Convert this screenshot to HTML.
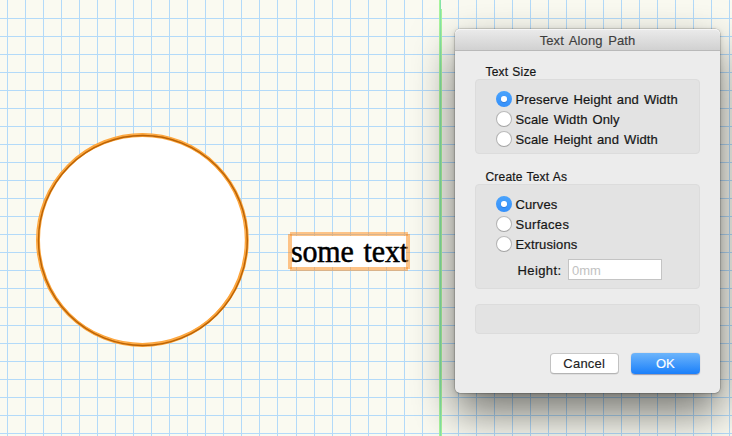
<!DOCTYPE html>
<html><head><meta charset="utf-8"><title>Text Along Path</title>
<style>
html,body{margin:0;padding:0;}
body{width:732px;height:436px;overflow:hidden;background:#fafaf1;position:relative;font-family:"Liberation Sans",sans-serif;}
#grid{position:absolute;left:0;top:0;}
#sometext{position:absolute;left:292px;top:236px;width:114px;height:31px;background:#fff;}
.bd{position:absolute;background:rgba(255,140,30,0.5);}
#sometext span{position:absolute;left:-1px;top:-1.5px;-webkit-text-stroke:0.5px #000;letter-spacing:-0.15px;word-spacing:2.5px;transform:scaleY(1.035);transform-origin:0 27px;font-family:"Liberation Serif",serif;font-size:30px;line-height:34px;color:#000;white-space:nowrap;}
#dlg{position:absolute;left:455px;top:29px;width:265px;height:364px;background:#ececec;border-radius:5px;box-shadow:0 0 0 0.5px rgba(0,0,0,0.25),0 20px 44px rgba(0,0,0,0.55),0 1px 5px rgba(0,0,0,0.18);}
#title{position:absolute;left:0;top:0;width:265px;height:21px;border-radius:5px 5px 0 0;background:linear-gradient(#ebebeb,#d1d1d1);border-bottom:1px solid #b9b9b9;box-shadow:inset 0 1px 0 #f6f6f6;text-align:center;font-size:13px;line-height:23px;color:#3e3e3e;-webkit-text-stroke:0.15px #3e3e3e;word-spacing:2px;letter-spacing:0.08px;}
.lbl{position:absolute;font-size:13px;line-height:14px;color:#161616;-webkit-text-stroke:0.2px #161616;white-space:nowrap;word-spacing:1.3px;letter-spacing:0.12px;}
.lbl.sm{font-size:12px;word-spacing:0.5px;letter-spacing:0.2px;}
.box{position:absolute;left:20px;width:223px;background:#e3e3e3;border:1px solid #dcdcdc;border-radius:4px;}
.radio{position:absolute;width:14px;height:14px;border-radius:50%;border:1px solid;border-color:#bbb #b2b2b2 #a4a4a4;background:#fff;}
.radio.on{border:none;width:16px;height:16px;background:linear-gradient(#4aa3fc,#3490fb);}
.radio.on::after{content:"";position:absolute;left:5.25px;top:5.25px;width:5.5px;height:5.5px;border-radius:50%;background:#fff;box-shadow:0 0.8px 0.8px rgba(20,70,160,0.45);}
#inp{position:absolute;left:113px;top:230px;width:92px;height:18.5px;border:1px solid #c4c4c4;background:#fff;font-size:13px;line-height:18px;color:#c2c2c2;}
#inp span{position:absolute;left:3px;top:1.6px;}
.btn{position:absolute;top:324.5px;height:19px;width:67px;border-radius:4px;font-size:13px;line-height:19px;text-align:center;}
#cancel{left:95px;top:324px;width:66.5px;height:18.5px;line-height:19px;letter-spacing:0.25px;background:#fff;border:1px solid;border-color:#c8c8c8 #c2c2c2 #b4b4b4;box-shadow:0 0.5px 0.5px rgba(0,0,0,0.12);color:#222;-webkit-text-stroke:0.15px #222;}
#ok{left:176px;top:324px;width:68.7px;height:21px;line-height:21px;background:linear-gradient(#6db5fb,#1a7ffa);color:#fff;box-shadow:0 0.5px 1px rgba(0,0,60,0.35);-webkit-text-stroke:0.15px #fff;}
</style></head><body>
<svg id="grid" width="732" height="436" viewBox="0 0 732 436" shape-rendering="crispEdges">
<g fill="#b3daf9">
<rect x="7" y="0" width="1" height="436"/>
<rect x="25" y="0" width="1" height="436"/>
<rect x="43" y="0" width="1" height="436"/>
<rect x="61" y="0" width="1" height="436"/>
<rect x="79" y="0" width="1" height="436"/>
<rect x="97" y="0" width="1" height="436"/>
<rect x="115" y="0" width="1" height="436"/>
<rect x="133" y="0" width="1" height="436"/>
<rect x="151" y="0" width="1" height="436"/>
<rect x="169" y="0" width="1" height="436"/>
<rect x="187" y="0" width="1" height="436"/>
<rect x="205" y="0" width="1" height="436"/>
<rect x="223" y="0" width="1" height="436"/>
<rect x="241" y="0" width="1" height="436"/>
<rect x="259" y="0" width="1" height="436"/>
<rect x="277" y="0" width="1" height="436"/>
<rect x="296" y="0" width="1" height="436"/>
<rect x="314" y="0" width="1" height="436"/>
<rect x="332" y="0" width="1" height="436"/>
<rect x="350" y="0" width="1" height="436"/>
<rect x="368" y="0" width="1" height="436"/>
<rect x="386" y="0" width="1" height="436"/>
<rect x="404" y="0" width="1" height="436"/>
<rect x="422" y="0" width="1" height="436"/>
<rect x="458" y="0" width="1" height="436"/>
<rect x="476" y="0" width="1" height="436"/>
<rect x="494" y="0" width="1" height="436"/>
<rect x="512" y="0" width="1" height="436"/>
<rect x="530" y="0" width="1" height="436"/>
<rect x="548" y="0" width="1" height="436"/>
<rect x="566" y="0" width="1" height="436"/>
<rect x="585" y="0" width="1" height="436"/>
<rect x="603" y="0" width="1" height="436"/>
<rect x="621" y="0" width="1" height="436"/>
<rect x="639" y="0" width="1" height="436"/>
<rect x="657" y="0" width="1" height="436"/>
<rect x="675" y="0" width="1" height="436"/>
<rect x="693" y="0" width="1" height="436"/>
<rect x="711" y="0" width="1" height="436"/>
<rect x="729" y="0" width="1" height="436"/>
<rect x="0" y="18" width="732" height="1"/>
<rect x="0" y="36" width="732" height="1"/>
<rect x="0" y="54" width="732" height="1"/>
<rect x="0" y="72" width="732" height="1"/>
<rect x="0" y="90" width="732" height="1"/>
<rect x="0" y="108" width="732" height="1"/>
<rect x="0" y="126" width="732" height="1"/>
<rect x="0" y="144" width="732" height="1"/>
<rect x="0" y="162" width="732" height="1"/>
<rect x="0" y="180" width="732" height="1"/>
<rect x="0" y="198" width="732" height="1"/>
<rect x="0" y="216" width="732" height="1"/>
<rect x="0" y="234" width="732" height="1"/>
<rect x="0" y="252" width="732" height="1"/>
<rect x="0" y="270" width="732" height="1"/>
<rect x="0" y="288" width="732" height="1"/>
<rect x="0" y="307" width="732" height="1"/>
<rect x="0" y="325" width="732" height="1"/>
<rect x="0" y="343" width="732" height="1"/>
<rect x="0" y="361" width="732" height="1"/>
<rect x="0" y="379" width="732" height="1"/>
<rect x="0" y="397" width="732" height="1"/>
<rect x="0" y="415" width="732" height="1"/>
<rect x="0" y="433" width="732" height="1"/>
</g>
<rect x="439" y="0" width="1" height="436" fill="#a8f49c"/>
<rect x="440" y="0" width="1" height="436" fill="#86e4a8"/>
<rect x="441" y="9" width="1" height="436" fill="#a8f49c"/>
</svg>
<svg id="circ" width="732" height="436" viewBox="0 0 732 436" style="position:absolute;left:0;top:0">
<ellipse cx="142.9" cy="240.5" rx="104.4" ry="105.0" fill="#fff"/>
<g fill="none" stroke="#fda63d" stroke-width="1.3">
<ellipse cx="141.05" cy="239.95" rx="104.4" ry="105.0"/>
<ellipse cx="143.75" cy="239.95" rx="104.4" ry="105.0"/>
<ellipse cx="142.40" cy="238.60" rx="104.4" ry="105.0"/>
<ellipse cx="142.40" cy="241.30" rx="104.4" ry="105.0"/>
<ellipse cx="142.40" cy="239.95" rx="104.4" ry="105.0"/>
</g>
<ellipse cx="142.9" cy="240.5" rx="104.4" ry="105.0" fill="none" stroke="#b96205" stroke-width="1.4"/>
</svg>
<div id="sometext"><span>some text</span></div>
<div class="bd" style="left:290px;top:232px;width:118px;height:4px"></div>
<div class="bd" style="left:290px;top:267px;width:118px;height:3.8px"></div>
<div class="bd" style="left:288px;top:234px;width:4px;height:34.8px"></div>
<div class="bd" style="left:406px;top:234px;width:4px;height:34.8px"></div>
<div id="dlg">
<div id="title">Text Along Path</div>
<div class="lbl sm" style="left:30.5px;top:36px">Text Size</div>
<div class="box" style="top:50px;height:73px"></div>
<div class="radio on" style="left:41px;top:62px"></div>
<div class="radio" style="left:41px;top:82px"></div>
<div class="radio" style="left:41px;top:102px"></div>
<div class="lbl" style="left:60.5px;top:63.5px">Preserve Height and Width</div>
<div class="lbl" style="left:60.5px;top:83.5px">Scale Width Only</div>
<div class="lbl" style="left:60.5px;top:103.5px">Scale Height and Width</div>
<div class="lbl sm" style="left:30.5px;top:141px">Create Text As</div>
<div class="box" style="top:155px;height:103px"></div>
<div class="radio on" style="left:41px;top:167px"></div>
<div class="radio" style="left:41px;top:187px"></div>
<div class="radio" style="left:41px;top:207px"></div>
<div class="lbl" style="left:60.5px;top:168.5px">Curves</div>
<div class="lbl" style="left:60.5px;top:188.5px;letter-spacing:0.3px">Surfaces</div>
<div class="lbl" style="left:60.5px;top:208.5px">Extrusions</div>
<div class="lbl" style="left:62.5px;top:235px;letter-spacing:0.4px">Height:</div>
<div id="inp"><span>0mm</span></div>
<div class="box" style="top:275px;height:28px"></div>
<div class="btn" id="cancel">Cancel</div>
<div class="btn" id="ok">OK</div>
</div>
</body></html>
